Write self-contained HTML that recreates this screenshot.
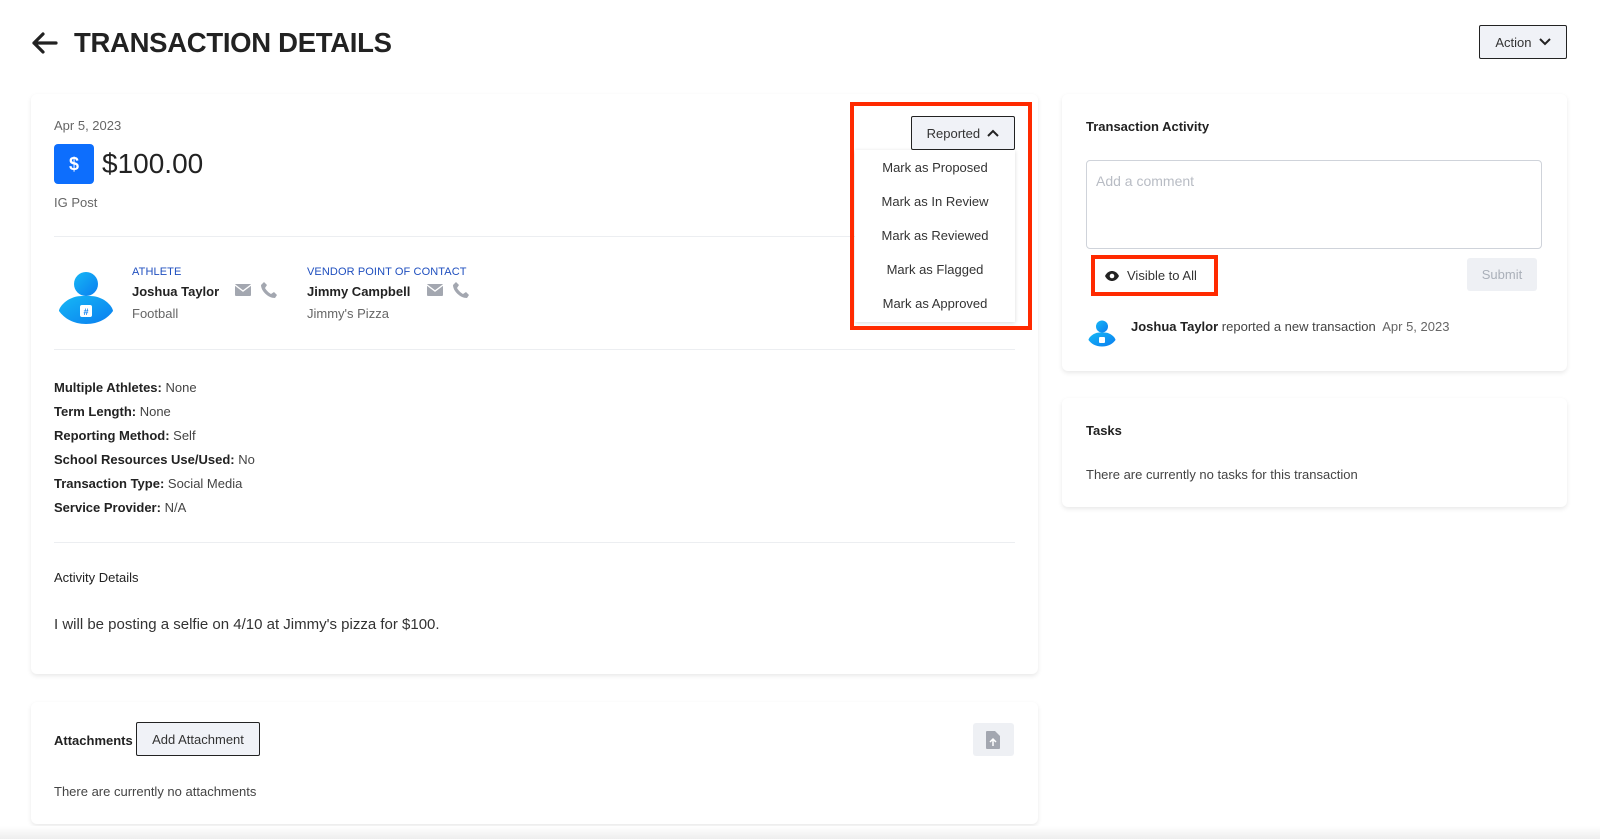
<!DOCTYPE html>
<html><head><meta charset="utf-8"><style>
*{box-sizing:border-box;margin:0;padding:0}
body{width:1600px;height:839px;background:#fff;font-family:"Liberation Sans",sans-serif;color:#222;position:relative;overflow:hidden}
.a{position:absolute}
.card{position:absolute;background:#fff;border-radius:6px;box-shadow:0 2px 5px rgba(0,0,0,.09)}
.t13{font-size:13px}
.gray{color:#666}
.lbl{font-size:11px;color:#1f4fbf;letter-spacing:.1px}
.bold{font-weight:bold}
.hr{position:absolute;height:1px;background:#eceef1}
.btn{position:absolute;border:1px solid #222;background:#f0f2f7;border-radius:2px;font-size:13px;color:#333;display:flex;align-items:center;justify-content:center}
.row{position:absolute;left:54px;font-size:13px;color:#444}
.row b{color:#222;font-weight:bold}
.mi{position:absolute;left:855px;width:160px;text-align:center;font-size:13px;color:#333}
</style></head><body>
<svg class="a" style="left:30px;top:31px" width="28" height="24" viewBox="0 0 28 24"><path d="M26 12H4M13 3L4 12l9 9" stroke="#222" stroke-width="3.2" fill="none" stroke-linecap="round" stroke-linejoin="round"/></svg>
<div class="a bold" style="left:74px;top:27px;font-size:27.5px;letter-spacing:-0.3px;color:#222">TRANSACTION DETAILS</div>
<div class="btn" style="left:1479px;top:25px;width:88px;height:34px;font-size:13px">Action&nbsp;&nbsp;<svg width="12" height="8" viewBox="0 0 12 8"><path d="M1 1l5 5 5-5" stroke="#222" stroke-width="2" fill="none"/></svg></div>

<div class="card" style="left:31px;top:94px;width:1007px;height:580px"></div>
<div class="a t13 gray" style="left:54px;top:118px">Apr 5, 2023</div>
<div class="a" style="left:54px;top:144px;width:40px;height:40px;background:#0d6efd;border-radius:4px;color:#fff;font-weight:bold;font-size:18px;text-align:center;line-height:40px">$</div>
<div class="a" style="left:102px;top:148px;font-size:28px;color:#222">$100.00</div>
<div class="a t13 gray" style="left:54px;top:195px">IG Post</div>
<div class="hr" style="left:54px;top:236px;width:961px"></div>

<svg class="a" style="left:58px;top:272px" width="56" height="52" viewBox="0 0 56 52"><defs><linearGradient id="g" x1="0" y1="0" x2="1" y2="1"><stop offset="0" stop-color="#16b8f5"/><stop offset="1" stop-color="#0a7df0"/></linearGradient></defs><circle cx="28" cy="12" r="12" fill="url(#g)"/><path d="M14 26c4-2 8-2 14-2s10 0 14 2c8 3 13 10 13 13-5 7-14 13-27 13S6 46 1 39c0-3 5-10 13-13z" fill="url(#g)"/><rect x="22" y="33" width="12" height="12" rx="2" fill="#fff"/><text x="28" y="43" font-size="9" font-family="Liberation Sans" fill="#0a7df0" text-anchor="middle" font-weight="bold">#</text></svg>
<div class="a lbl" style="left:132px;top:266px">ATHLETE</div>
<div class="a bold" style="left:132px;top:284px;font-size:13px">Joshua Taylor</div>
<div class="a t13 gray" style="left:132px;top:306px">Football</div>
<svg class="a" style="left:235px;top:284px" width="16" height="12" viewBox="0 0 16 12"><rect width="16" height="12" rx="1" fill="#a3a7b0"/><path d="M0 1l8 6 8-6" stroke="#fff" stroke-width="1.3" fill="none"/></svg>
<svg class="a" style="left:261px;top:282px" width="16" height="16" viewBox="0 0 16 16"><path d="M3 0l3 3-2 3c1 2 4 5 6 6l3-2 3 3-2 3C7 16 0 9 0 3z" fill="#a3a7b0"/></svg>
<div class="a lbl" style="left:307px;top:266px">VENDOR POINT OF CONTACT</div>
<div class="a bold" style="left:307px;top:284px;font-size:13px">Jimmy Campbell</div>
<div class="a t13 gray" style="left:307px;top:306px">Jimmy's Pizza</div>
<svg class="a" style="left:427px;top:284px" width="16" height="12" viewBox="0 0 16 12"><rect width="16" height="12" rx="1" fill="#a3a7b0"/><path d="M0 1l8 6 8-6" stroke="#fff" stroke-width="1.3" fill="none"/></svg>
<svg class="a" style="left:453px;top:282px" width="16" height="16" viewBox="0 0 16 16"><path d="M3 0l3 3-2 3c1 2 4 5 6 6l3-2 3 3-2 3C7 16 0 9 0 3z" fill="#a3a7b0"/></svg>
<div class="hr" style="left:54px;top:349px;width:961px"></div>

<div class="row" style="top:380px"><b>Multiple Athletes:</b> None</div>
<div class="row" style="top:404px"><b>Term Length:</b> None</div>
<div class="row" style="top:428px"><b>Reporting Method:</b> Self</div>
<div class="row" style="top:452px"><b>School Resources Use/Used:</b> No</div>
<div class="row" style="top:476px"><b>Transaction Type:</b> Social Media</div>
<div class="row" style="top:500px"><b>Service Provider:</b> N/A</div>
<div class="hr" style="left:54px;top:542px;width:961px"></div>
<div class="a t13" style="left:54px;top:570px">Activity Details</div>
<div class="a" style="left:54px;top:616px;font-size:15px;color:#333">I will be posting a selfie on 4/10 at Jimmy's pizza for $100.</div>

<div class="a" style="left:855px;top:150px;width:160px;height:172px;background:#fff;box-shadow:0 1px 4px rgba(0,0,0,.15)"></div>
<div class="btn" style="left:911px;top:116px;width:104px;height:34px">Reported&nbsp;&nbsp;<svg width="12" height="8" viewBox="0 0 12 8"><path d="M1 7l5-5 5 5" stroke="#222" stroke-width="2" fill="none"/></svg></div>
<div class="mi" style="top:160px">Mark as Proposed</div>
<div class="mi" style="top:194px">Mark as In Review</div>
<div class="mi" style="top:228px">Mark as Reviewed</div>
<div class="mi" style="top:262px">Mark as Flagged</div>
<div class="mi" style="top:296px">Mark as Approved</div>
<div class="a" style="left:850px;top:102px;width:182px;height:228px;border:4px solid #ff2a00"></div>

<div class="card" style="left:1062px;top:94px;width:505px;height:277px"></div>
<div class="a bold t13" style="left:1086px;top:119px">Transaction Activity</div>
<div class="a" style="left:1086px;top:160px;width:456px;height:89px;border:1px solid #cfd3da;border-radius:4px;padding:12px 9px;font-size:14px;color:#b8bcc4">Add a comment</div>
<div class="a" style="left:1091px;top:255px;width:127px;height:41px;border:4px solid #ff2a00;display:flex;align-items:center;padding-left:10px;font-size:13px;color:#333"><svg width="14" height="10" viewBox="0 0 14 10" style="margin-right:8px"><path d="M0 5C2 1 5 0 7 0s5 1 7 5c-2 4-5 5-7 5S2 9 0 5z" fill="#222"/><circle cx="7" cy="5" r="2.3" fill="#fff"/></svg>Visible to All</div>
<div class="a" style="left:1467px;top:258px;width:70px;height:33px;background:#eef0f4;border-radius:3px;color:#aab0b9;font-size:13px;text-align:center;line-height:33px">Submit</div>
<svg class="a" style="left:1088px;top:319px" width="28" height="29" viewBox="0 0 56 52"><defs><linearGradient id="g2" x1="0" y1="0" x2="1" y2="1"><stop offset="0" stop-color="#16b8f5"/><stop offset="1" stop-color="#0a7df0"/></linearGradient></defs><circle cx="28" cy="12" r="12" fill="url(#g2)"/><path d="M14 26c4-2 8-2 14-2s10 0 14 2c8 3 13 10 13 13-5 7-14 13-27 13S6 46 1 39c0-3 5-10 13-13z" fill="url(#g2)"/><rect x="22" y="33" width="12" height="12" rx="2" fill="#fff"/></svg>
<div class="a t13" style="left:1131px;top:319px;color:#444"><b style="color:#222">Joshua Taylor</b> reported a new transaction&nbsp; <span class="gray">Apr 5, 2023</span></div>

<div class="card" style="left:1062px;top:398px;width:505px;height:109px"></div>
<div class="a bold t13" style="left:1086px;top:423px">Tasks</div>
<div class="a t13" style="left:1086px;top:467px;color:#444">There are currently no tasks for this transaction</div>

<div class="card" style="left:31px;top:702px;width:1007px;height:122px"></div>
<div class="a bold t13" style="left:54px;top:733px">Attachments</div>
<div class="btn" style="left:136px;top:722px;width:124px;height:34px">Add Attachment</div>
<div class="a" style="left:973px;top:723px;width:41px;height:33px;background:#eef0f4;border-radius:3px"></div>
<svg class="a" style="left:986px;top:731px" width="14" height="18" viewBox="0 0 14 18"><path d="M0 1a1 1 0 011-1h8l5 5v12a1 1 0 01-1 1H1a1 1 0 01-1-1z" fill="#a3a7b0"/><path d="M7 15V8M4 11l3-3 3 3" stroke="#fff" stroke-width="1.5" fill="none"/></svg>
<div class="a t13" style="left:54px;top:784px;color:#444">There are currently no attachments</div>
<div class="a" style="left:0;top:826px;width:1600px;height:13px;background:linear-gradient(#fff,#eee)"></div>
</body></html>
